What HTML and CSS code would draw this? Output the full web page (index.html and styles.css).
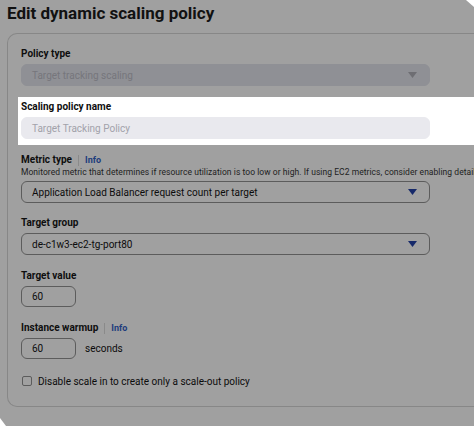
FILE: index.html
```html
<!DOCTYPE html>
<html>
<head>
<meta charset="utf-8">
<link rel="stylesheet" href="styles.css">
</head>
<body>
<div class="page">
  <h1 class="title">Edit dynamic scaling policy</h1>
  <div class="card">
    <div class="field first">
      <div class="label">Policy type</div>
      <div class="select disabled">
        <span>Target tracking scaling</span>
        <svg class="caret" width="9" height="6" viewBox="0 0 9 6"><path d="M0 0H9L4.5 6Z" fill="#6e6e73"/></svg>
      </div>
    </div>
    <div class="highlight">
      <div class="label">Scaling policy name</div>
      <div class="input wide">Target Tracking Policy</div>
    </div>
    <div class="field metric">
      <div class="label">Metric type <span class="sep"></span><span class="info">Info</span></div>
      <div class="desc">Monitored metric that determines if resource utilization is too low or high. If using EC2 metrics, consider enabling detailed monitoring.</div>
      <div class="select">
        <span>Application Load Balancer request count per target</span>
        <svg class="caret" width="9" height="6" viewBox="0 0 9 6"><path d="M0 0H9L4.5 6Z" fill="#16296a"/></svg>
      </div>
    </div>
    <div class="field group">
      <div class="label">Target group</div>
      <div class="select">
        <span>de-c1w3-ec2-tg-port80</span>
        <svg class="caret" width="9" height="6" viewBox="0 0 9 6"><path d="M0 0H9L4.5 6Z" fill="#16296a"/></svg>
      </div>
    </div>
    <div class="field">
      <div class="label">Target value</div>
      <div class="input small">60</div>
    </div>
    <div class="field">
      <div class="label">Instance warmup <span class="sep"></span><span class="info">Info</span></div>
      <div class="row">
        <div class="input small">60</div>
        <span class="unit">seconds</span>
      </div>
    </div>
    <label class="check">
      <span class="box"></span>
      <span>Disable scale in to create only a scale-out policy</span>
    </label>
  </div>
</div>
</body>
</html>
```
FILE: styles.css
```css
* { box-sizing: border-box; }
html, body { margin: 0; padding: 0; }
body {
  background: #a0a0a0;
  font-family: Roboto, "Liberation Sans", sans-serif;
  color: #0c0c0c;
  overflow: hidden;
  width: 474px;
  height: 426px;
  position: relative;
}
body::before,
body::after {
  content: "";
  position: absolute;
  background: #ffffff;
}
body::before {
  top: 0;
  right: 0;
  width: 8px;
  height: 7px;
  clip-path: polygon(0 0, 100% 0, 100% 100%);
}
body::after {
  bottom: 0;
  left: 0;
  width: 6px;
  height: 8px;
  clip-path: polygon(0 0, 100% 100%, 0 100%);
}
.page { padding: 0 0 0 7px; }
.title {
  margin: 0;
  padding-top: 2px;
  font-size: 17px;
  font-weight: 700;
  line-height: 22px;
  height: 33px;
  color: #111;
}
.card {
  width: 500px;
  height: 374px;
  border: 1px solid #878787;
  border-right: none;
  border-radius: 10px 0 0 10px;
  padding: 13px 0 0 13px;
}
.label {
  font-size: 10px;
  font-weight: 700;
  line-height: 14px;
  height: 14px;
  display: flex;
  align-items: center;
  color: #0e0e0e;
  margin-bottom: 3px;
}
.sep {
  display: inline-block;
  width: 1px;
  height: 11px;
  background: #8a8a8a;
  margin: 0 6px 0 6px;
}
.info {
  color: #1d3c7c;
  font-size: 9px;
  font-weight: 700;
}
.select {
  width: 409px;
  height: 22px;
  border: 1px solid #5c5c5c;
  border-radius: 6px;
  display: flex;
  align-items: center;
  justify-content: space-between;
  padding: 0 12px 0 10px;
  font-size: 10px;
}
.select.disabled {
  border-color: #8f9095;
  background: #8f9095;
  color: #76767c;
}
.highlight {
  background: #ffffff;
  margin: 11px 0 0 -3px;
  padding: 3px 0 6px 3px;
  width: 470px;
  height: 48px;
}
.input {
  height: 21px;
  border: 1px solid #5c5c5c;
  border-radius: 6px;
  display: flex;
  align-items: center;
  padding-left: 10px;
  font-size: 10px;
}
.input.wide {
  width: 409px;
  height: 22px;
  border-color: #e9e9ee;
  background: #e9e9ee;
  color: #a2a2aa;
}
.input.small { width: 55px; }
.desc {
  font-size: 8.5px;
  line-height: 11px;
  letter-spacing: 0.05px;
  white-space: nowrap;
  color: #1e1e1e;
  margin-bottom: 3px;
}
.field { margin-top: 14px; }
.field.first { margin-top: 0; }
.field.metric { margin-top: 8px; }
.field.metric .label { margin-bottom: 0; }
.field.group { margin-top: 13px; }
.row { display: flex; align-items: center; gap: 9px; }
.row .input { height: 21px; }
.unit { font-size: 10px; }
.check {
  margin-top: 15px;
  height: 14px;
  display: flex;
  align-items: center;
  gap: 6px;
  font-size: 10px;
}
.box {
  width: 10px;
  height: 10px;
  border: 1px solid #5c5c5c;
  border-radius: 2px;
  margin-left: 1px;
}
```
